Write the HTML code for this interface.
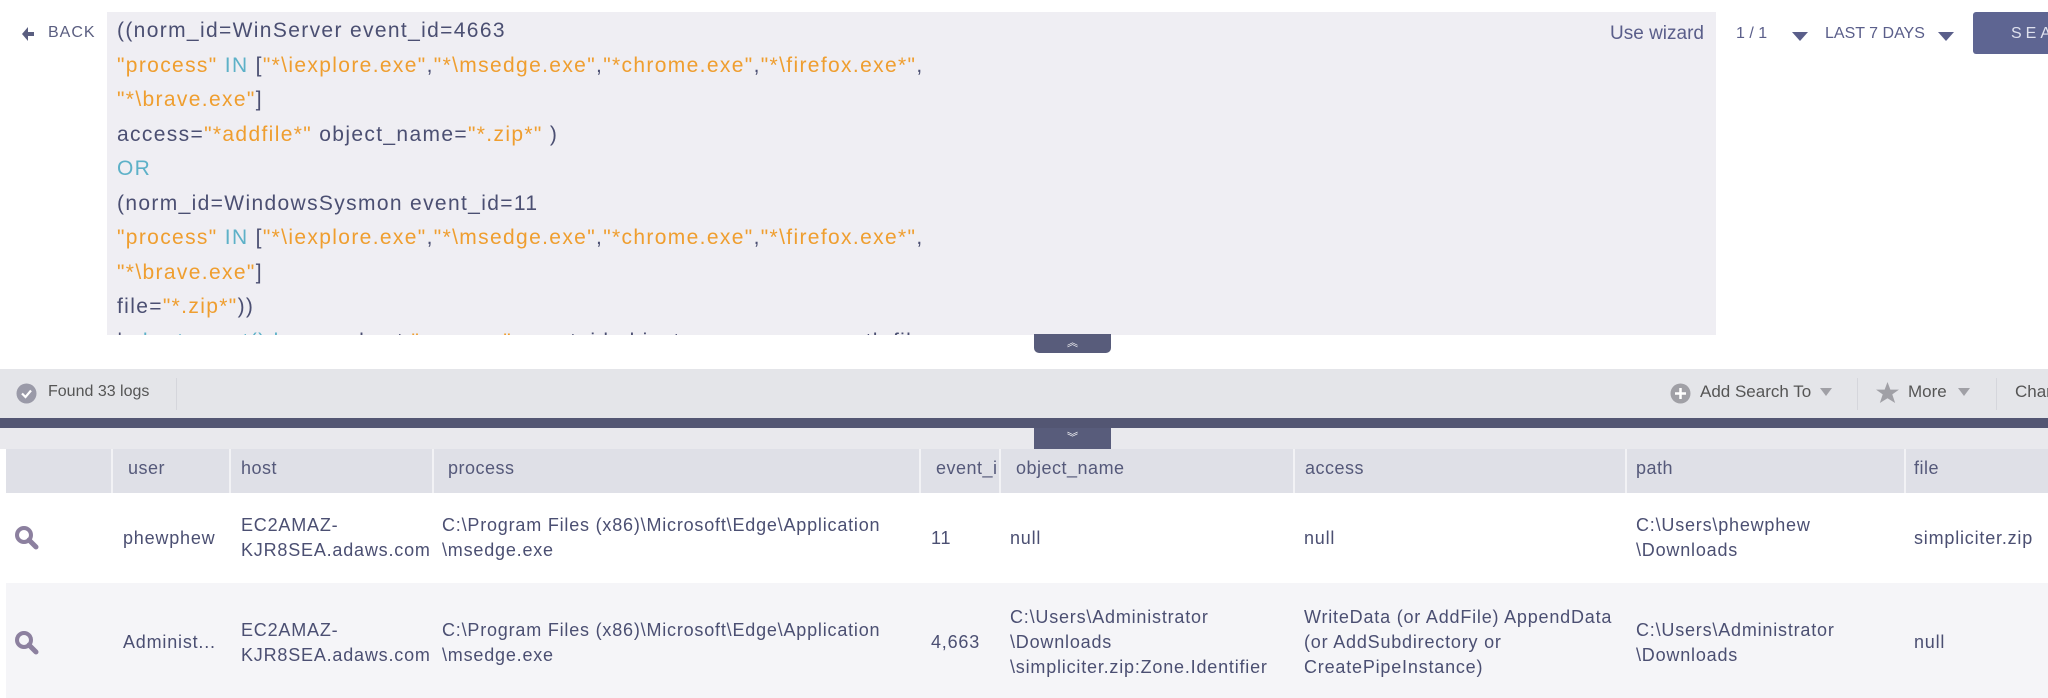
<!DOCTYPE html>
<html><head><meta charset="utf-8"><style>
*{margin:0;padding:0;box-sizing:border-box}
body{width:2048px;height:698px;overflow:hidden;background:#fff;font-family:"Liberation Sans",sans-serif;color:#4b4f72;position:relative}
.a{position:absolute;white-space:nowrap}
#ed{position:absolute;left:107px;top:12px;width:1609px;height:323px;background:#efeef3;overflow:hidden}
#ed div{position:absolute;left:10px;font-size:21px;letter-spacing:1.35px;line-height:34px;white-space:nowrap;color:#4b4f72}
.o{color:#ef9e2f}.t{color:#5db1c8}
.tb{position:absolute;left:0;top:369px;width:2048px;height:49px;background:#e4e5e9}
.bar{position:absolute;left:0;top:418px;width:2048px;height:10px;background:#535673}
.lb{position:absolute;left:0;top:428px;width:2048px;height:21px;background:#e9e9ed}
.tab{position:absolute;left:1034px;width:77px;background:#585c7b;color:#fff;font-size:11px;text-align:center}
.hd{position:absolute;left:6px;top:449px;width:2042px;height:44px;background:#dfe0e7}
.r1{position:absolute;left:6px;top:493px;width:2042px;height:90px;background:#fff}
.r2{position:absolute;left:6px;top:583px;width:2042px;height:115px;background:#f5f5f8}
.vl{position:absolute;top:449px;width:2px;height:44px;background:#f2f2f5}
.h{font-size:18px;letter-spacing:0.5px;top:458px;color:#55597a}
.c{font-size:18px;letter-spacing:0.8px;line-height:25px;color:#4b4f72}
</style></head><body>
<svg class="a" style="left:21px;top:26px" width="14" height="16" viewBox="0 0 14 16"><path d="M7 1L1 8L7 15V10H13V6H7Z" fill="#5a5e80"/></svg>
<div class="a" style="left:48px;top:24px;font-size:16px;letter-spacing:1px;color:#5a5e80">BACK</div>
<div id="ed">
<div style="top:2px">((norm_id=WinServer event_id=4663</div>
<div style="top:36.5px"><span class="o">"process"</span> <span class="t">IN</span> [<span class="o">"*\iexplore.exe"</span>,<span class="o">"*\msedge.exe"</span>,<span class="o">"*chrome.exe"</span>,<span class="o">"*\firefox.exe*"</span>,</div>
<div style="top:71px"><span class="o">"*\brave.exe"</span>]</div>
<div style="top:105.5px">access=<span class="o">"*addfile*"</span> object_name=<span class="o">"*.zip*"</span> )</div>
<div style="top:140px"><span class="t">OR</span></div>
<div style="top:174.5px">(norm_id=WindowsSysmon event_id=11</div>
<div style="top:209px"><span class="o">"process"</span> <span class="t">IN</span> [<span class="o">"*\iexplore.exe"</span>,<span class="o">"*\msedge.exe"</span>,<span class="o">"*chrome.exe"</span>,<span class="o">"*\firefox.exe*"</span>,</div>
<div style="top:243.5px"><span class="o">"*\brave.exe"</span>]</div>
<div style="top:278px">file=<span class="o">"*.zip*"</span>))</div>
<div style="top:312.5px">| <span class="t">chart count()</span> <span class="t">by</span> user host <span class="o">"process"</span> event_id object_name access path file</div>
</div>
<div class="a" style="left:1610px;top:23px;font-size:19px;color:#5a5e8a">Use wizard</div>
<div class="a" style="left:1736px;top:25px;font-size:16px;color:#5a5e8a">1 / 1</div>
<svg class="a" style="left:1792px;top:32px" width="16" height="9"><path d="M0 0H16L8 9Z" fill="#5a5e8a"/></svg>
<div class="a" style="left:1825px;top:25px;font-size:16px;color:#5a5e8a">LAST 7 DAYS</div>
<svg class="a" style="left:1938px;top:32px" width="16" height="9"><path d="M0 0H16L8 9Z" fill="#5a5e8a"/></svg>
<div class="a" style="left:1973px;top:12px;width:80px;height:42px;background:#5e6592;border-radius:3px;color:#dfe1ee;font-size:16px;letter-spacing:4px;padding:13px 0 0 38px">SEARCH</div>
<div class="tab" style="top:334px;height:19px;border-radius:0 0 5px 5px">︽</div>
<div class="tb"></div>
<svg class="a" style="left:16px;top:383px" width="21" height="21"><circle cx="10.5" cy="10.5" r="10" fill="#9a9aa8"/><path d="M6 10.5L9.5 14L15 7.5" stroke="#fff" stroke-width="2.2" fill="none"/></svg>
<div class="a" style="left:48px;top:383px;font-size:16px;color:#555">Found 33 logs</div>
<div class="a" style="left:176px;top:378px;width:1px;height:32px;background:#d5d6dc"></div>
<svg class="a" style="left:1670px;top:383px" width="21" height="21"><circle cx="10.5" cy="10.5" r="10" fill="#a0a0a6"/><path d="M10.5 5V16M5 10.5H16" stroke="#fff" stroke-width="2.5"/></svg>
<div class="a" style="left:1700px;top:382px;font-size:17px;color:#555">Add Search To</div>
<svg class="a" style="left:1820px;top:388px" width="12" height="8"><path d="M0 0H12L6 8Z" fill="#a0a0a6"/></svg>
<div class="a" style="left:1857px;top:378px;width:1px;height:32px;background:#d5d6dc"></div>
<svg class="a" style="left:1876px;top:382px" width="23" height="22" viewBox="0 0 24 23"><path d="M12 0L15 8H24L17 13L20 22L12 17L4 22L7 13L0 8H9Z" fill="#a0a0a6"/></svg>
<div class="a" style="left:1908px;top:382px;font-size:17px;color:#555">More</div>
<svg class="a" style="left:1958px;top:388px" width="12" height="8"><path d="M0 0H12L6 8Z" fill="#a0a0a6"/></svg>
<div class="a" style="left:1996px;top:378px;width:1px;height:32px;background:#d5d6dc"></div>
<div class="a" style="left:2015px;top:382px;font-size:17px;color:#555">Chart</div>
<div class="bar"></div><div class="lb"></div>
<div class="tab" style="top:428px;height:21px;line-height:20px">︾</div>
<div class="hd"></div><div class="r1"></div><div class="r2"></div>
<div class="vl" style="left:111px"></div><div class="vl" style="left:229px"></div><div class="vl" style="left:432px"></div><div class="vl" style="left:919px"></div><div class="vl" style="left:999px"></div><div class="vl" style="left:1293px"></div><div class="vl" style="left:1625px"></div><div class="vl" style="left:1904px"></div>
<div class="a h" style="left:128px">user</div>
<div class="a h" style="left:241px">host</div>
<div class="a h" style="left:448px">process</div>
<div class="a h" style="left:936px;width:62px;overflow:hidden">event_id</div>
<div class="a h" style="left:1016px">object_name</div>
<div class="a h" style="left:1305px">access</div>
<div class="a h" style="left:1636px">path</div>
<div class="a h" style="left:1914px">file</div>
<svg class="a" style="left:14px;top:525px" width="26" height="26"><circle cx="10" cy="10" r="7" stroke="#8c809f" stroke-width="4" fill="none"/><path d="M15 15L22 22" stroke="#8c809f" stroke-width="5" stroke-linecap="round"/></svg>
<svg class="a" style="left:14px;top:630px" width="26" height="26"><circle cx="10" cy="10" r="7" stroke="#8c809f" stroke-width="4" fill="none"/><path d="M15 15L22 22" stroke="#8c809f" stroke-width="5" stroke-linecap="round"/></svg>
<div class="a c" style="left:123px;top:526px">phewphew</div>
<div class="a c" style="left:241px;top:513px">EC2AMAZ-<br>KJR8SEA.adaws.com</div>
<div class="a c" style="left:442px;top:513px">C:\Program Files (x86)\Microsoft\Edge\Application<br>\msedge.exe</div>
<div class="a c" style="left:931px;top:526px">11</div>
<div class="a c" style="left:1010px;top:526px">null</div>
<div class="a c" style="left:1304px;top:526px">null</div>
<div class="a c" style="left:1636px;top:513px">C:\Users\phewphew<br>\Downloads</div>
<div class="a c" style="left:1914px;top:526px">simpliciter.zip</div>
<div class="a c" style="left:123px;top:630px">Administ...</div>
<div class="a c" style="left:241px;top:618px">EC2AMAZ-<br>KJR8SEA.adaws.com</div>
<div class="a c" style="left:442px;top:618px">C:\Program Files (x86)\Microsoft\Edge\Application<br>\msedge.exe</div>
<div class="a c" style="left:931px;top:630px">4,663</div>
<div class="a c" style="left:1010px;top:605px">C:\Users\Administrator<br>\Downloads<br>\simpliciter.zip:Zone.Identifier</div>
<div class="a c" style="left:1304px;top:605px">WriteData (or AddFile) AppendData<br>(or AddSubdirectory or<br>CreatePipeInstance)</div>
<div class="a c" style="left:1636px;top:618px">C:\Users\Administrator<br>\Downloads</div>
<div class="a c" style="left:1914px;top:630px">null</div>
</body></html>
